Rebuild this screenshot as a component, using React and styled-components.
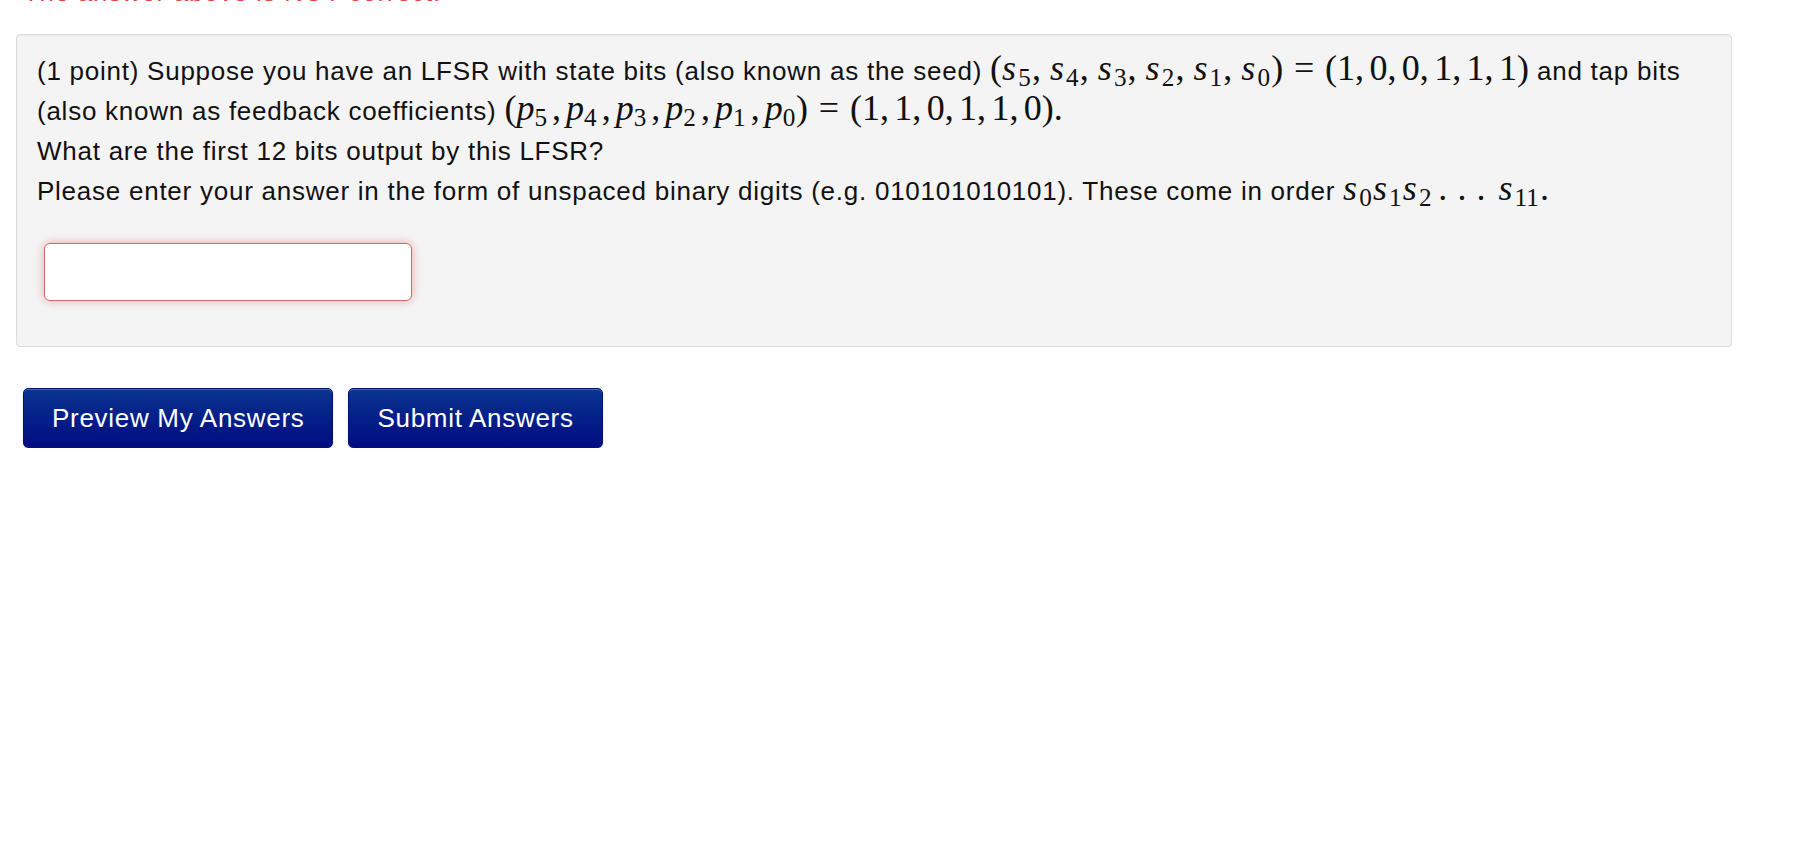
import React from "react";
import styled, { createGlobalStyle } from "styled-components";

const Global = createGlobalStyle`
  html, body { margin: 0; padding: 0; background: #ffffff; }
  body {
    font-family: "Liberation Sans", Arial, sans-serif;
    color: #111111;
    overflow: hidden;
  }
`;

const Page = styled.div`
  padding: 0 77px 0 16px;
`;

const Feedback = styled.div`
  margin-top: -23px;
  padding-left: 7px;
  font-size: 26px;
  letter-spacing: 0.7px;
  line-height: 30px;
  color: #e0443e;
`;

const Panel = styled.div`
  margin-top: 27px;
  box-sizing: border-box;
  background: #f4f4f4;
  border: 1px solid #dcdcdc;
  border-radius: 4px;
  box-shadow: inset 0 1px 1px rgba(0, 0, 0, 0.04);
  padding: 16px 20px 45px 20px;
`;

const Text = styled.div`
  font-size: 26px;
  letter-spacing: 0.75px;
  line-height: 40px;
  color: #111111;
`;

const Math = styled.span`
  font-family: "Liberation Serif", "DejaVu Serif", serif;
  font-size: 36px;
  letter-spacing: 0;
  line-height: 0.85;
  white-space: nowrap;
`;

const Var = styled.i`
  font-style: italic;
  padding-right: ${(p) => (p.$v === "s" ? "0.03em" : "0.02em")};
`;

const Base = styled.span`
  padding-right: ${(p) => (p.$v === "s" ? "0.06em" : "0")};
`;

const Sub = styled.sub`
  font-style: normal;
  font-size: 70%;
  vertical-align: -0.22em;
  line-height: 0;
`;

const Punct = styled.span`
  margin-left: ${(p) => p.$before || "0"};
  margin-right: ${(p) => p.$after || "0.17em"};
`;

const Rel = styled.span`
  margin: 0 0.3em;
`;

const Dots = styled.span`
  letter-spacing: 0.28em;
  margin: 0 0.08em 0 0.16em;
`;

const AnswerInput = styled.input`
  display: block;
  margin: 32px 0 0 7px;
  box-sizing: border-box;
  width: 368px;
  height: 58px;
  background: #ffffff;
  border: 1px solid #d46a6a;
  border-radius: 6px;
  box-shadow: 0 0 10px rgba(210, 60, 60, 0.4);
  outline: none;
  font-size: 25px;
  padding: 0 12px;
`;

const ButtonRow = styled.div`
  display: flex;
  gap: 15px;
  margin-top: 41px;
  padding-left: 7px;
`;

const Button = styled.button`
  box-sizing: border-box;
  height: 60px;
  padding: 0 28px;
  font-family: "Liberation Sans", Arial, sans-serif;
  font-size: 26px;
  letter-spacing: 0.7px;
  color: #ffffff;
  background: linear-gradient(to bottom, #0b3590 0%, #05258a 35%, #000c80 100%);
  border: 1px solid #00146a;
  border-radius: 5px;
  box-shadow: inset 0 1px 0 rgba(255, 255, 255, 0.25), 0 1px 2px rgba(0, 0, 0, 0.15);
  cursor: pointer;
`;

const SVar = ({ v, n }) => (
  <Var $v={v}>
    <Base $v={v}>{v}</Base>
    <Sub>{n}</Sub>
  </Var>
);

const commaFor = (kind) => {
  if (kind === "p") return <Punct $before="0.12em" $after="0.14em">,</Punct>;
  if (kind === "num") return <Punct $after="0.15em">,</Punct>;
  return <Punct $after="0.25em">,</Punct>;
};

const Tuple = ({ items, kind }) => (
  <>
    (
    {items.map((it, i) => (
      <React.Fragment key={i}>
        {it}
        {i < items.length - 1 && commaFor(kind)}
      </React.Fragment>
    ))}
    )
  </>
);

export default function App() {
  const sVars = [5, 4, 3, 2, 1, 0].map((n) => <SVar key={n} v="s" n={n} />);
  const pVars = [5, 4, 3, 2, 1, 0].map((n) => <SVar key={n} v="p" n={n} />);
  return (
    <Page>
      <Global />
      <Feedback>The answer above is NOT correct.</Feedback>
      <Panel>
        <Text>
          (1 point) Suppose you have an LFSR with state bits (also known as the seed){" "}
          <Math>
            <Tuple items={sVars} kind="s" />
            <Rel>=</Rel>
            <Tuple items={["1", "0", "0", "1", "1", "1"]} kind="num" />
          </Math>{" "}
          and tap bits
          <br />
          (also known as feedback coefficients){" "}
          <Math>
            <Tuple items={pVars} kind="p" />
            <Rel>=</Rel>
            <Tuple items={["1", "1", "0", "1", "1", "0"]} kind="num" />.
          </Math>
          <br />
          What are the first 12 bits output by this LFSR?
          <br />
          Please enter your answer in the form of unspaced binary digits (e.g. 010101010101). These come in order{" "}
          <Math>
            <SVar v="s" n="0" />
            <SVar v="s" n="1" />
            <SVar v="s" n="2" />
            <Dots>...</Dots>
            <SVar v="s" n="11" />.
          </Math>
        </Text>
        <AnswerInput type="text" aria-label="answer" />
      </Panel>
      <ButtonRow>
        <Button>Preview My Answers</Button>
        <Button>Submit Answers</Button>
      </ButtonRow>
    </Page>
  );
}
